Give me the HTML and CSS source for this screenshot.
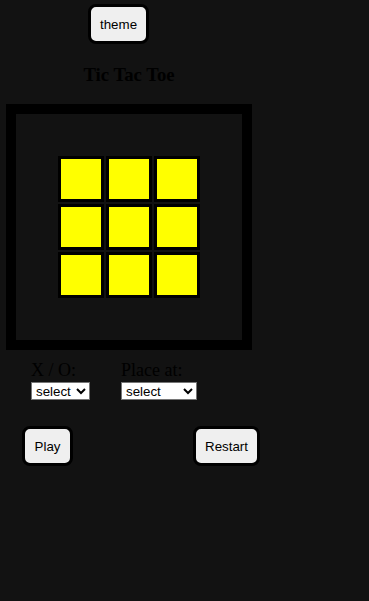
FILE: index.html
```html
<!DOCTYPE html>
<html lang="en">
<head>
    <meta charset="UTF-8">
    <meta name="viewport" content="width=device-width, initial-scale=1.0">
    <title>Tic Tac Toe</title>
    <link rel="stylesheet" href="styles.css">
</head>
<body>
    <button class="btn theme-btn">theme</button>

    <div class="wrap">
        <h3 class="title">Tic Tac Toe</h3>

        <div class="board">
            <div class="grid">
                <div class="cell"></div>
                <div class="cell"></div>
                <div class="cell"></div>
                <div class="cell"></div>
                <div class="cell"></div>
                <div class="cell"></div>
                <div class="cell"></div>
                <div class="cell"></div>
                <div class="cell"></div>
            </div>
        </div>
    </div>

    <div class="pick">
        <div class="col col1">
            <label class="lbl" for="xo">X / O:</label>
            <select id="xo" class="sel sel1">
                <option>select</option>
                <option>X</option>
                <option>O</option>
            </select>
        </div>
        <div class="col">
            <label class="lbl" for="place">Place at:</label>
            <select id="place" class="sel sel2">
                <option>select</option>
                <option>1</option>
                <option>2</option>
                <option>3</option>
                <option>4</option>
                <option>5</option>
                <option>6</option>
                <option>7</option>
                <option>8</option>
                <option>9</option>
            </select>
        </div>
    </div>

    <div class="actions">
        <button class="btn play-btn">Play</button>
        <button class="btn restart-btn">Restart</button>
    </div>
</body>
</html>
```

FILE: styles.css
```css
body{
    margin: 0;
    background-color: #121212;
    color: #000;
    font-family: "Liberation Serif", serif;
}

.btn{
    display: block;
    height: 40px;
    padding: 0 9px;
    background-color: #efefef;
    border: 3px solid #000;
    border-radius: 8px;
    font-family: "Liberation Sans", Arial, sans-serif;
    font-size: 13.33px;
    color: #000;
}

.theme-btn{
    margin: 4px 0 0 88px;
}

.wrap{
    width: 258px;
}

.title{
    margin: 20px 0 19px 0;
    font-size: 18.72px;
    font-weight: 700;
    text-align: center;
    line-height: 21px;
}

.board{
    margin-left: 6px;
    width: 226px;
    height: 226px;
    border: 10px solid #000;
    display: flex;
    justify-content: center;
    align-items: center;
}

.grid{
    display: grid;
    grid-template-columns: repeat(3, 46px);
    gap: 2px;
}

.cell{
    width: 40px;
    height: 40px;
    background-color: yellow;
    border: 3px solid #000;
}

.pick{
    display: flex;
    margin-top: 10px;
    padding-left: 31px;
}

.col{
    display: flex;
    flex-direction: column;
    align-items: flex-start;
}
.col1{
    width: 90px;
}

.lbl{
    font-size: 18px;
    line-height: 21px;
}

.sel{
    height: 18px;
    margin-top: 1px;
    padding: 0;
    font-family: "Liberation Sans", Arial, sans-serif;
    font-size: 13.33px;
    background-color: #fff;
    border: 1px solid #767676;
    border-radius: 0;
}
.sel1{
    width: 59px;
}
.sel2{
    width: 76px;
}

.actions{
    display: flex;
    margin-top: 26px;
}
.play-btn{
    margin-left: 22px;
    width: 51px;
}
.restart-btn{
    margin-left: 120px;
    width: 67px;
}
```
